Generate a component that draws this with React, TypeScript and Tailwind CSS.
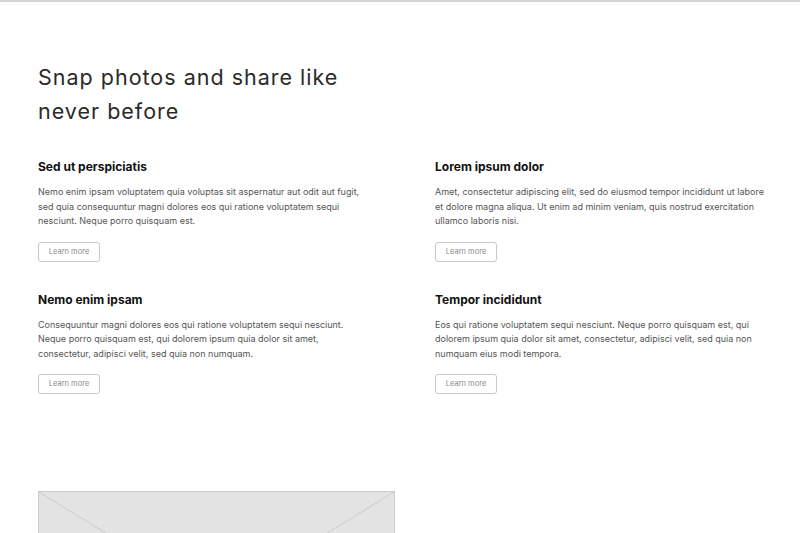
import React from 'react';

const features = [
  {
    title: 'Sed ut perspiciatis',
    body: 'Nemo enim ipsam voluptatem quia voluptas sit aspernatur aut odit aut fugit, sed quia consequuntur magni dolores eos qui ratione voluptatem sequi nesciunt. Neque porro quisquam est.',
  },
  {
    title: 'Lorem ipsum dolor',
    body: 'Amet, consectetur adipiscing elit, sed do eiusmod tempor incididunt ut labore et dolore magna aliqua. Ut enim ad minim veniam, quis nostrud exercitation ullamco laboris nisi.',
  },
  {
    title: 'Nemo enim ipsam',
    body: 'Consequuntur magni dolores eos qui ratione voluptatem sequi nesciunt. Neque porro quisquam est, qui dolorem ipsum quia dolor sit amet, consectetur, adipisci velit, sed quia non numquam.',
  },
  {
    title: 'Tempor incididunt',
    body: 'Eos qui ratione voluptatem sequi nesciunt. Neque porro quisquam est, qui dolorem ipsum quia dolor sit amet, consectetur, adipisci velit, sed quia non numquam eius modi tempora.',
  },
];

const Feature = ({ title, body }: { title: string; body: string }) => {
  return (
    <div>
      <h3 className="text-[12px] font-bold text-[#111] leading-[18px]">{title}</h3>
      <p className="mt-[9px] max-w-[332px] text-[9px] leading-[14.5px] text-[#555]">{body}</p>
      <button className="mt-[13px] h-[20px] w-[62px] rounded-[3px] border border-[#c8c8c8] text-[7.5px] text-[#8a8a8a]">
        Learn more
      </button>
    </div>
  );
};

const App = () => {
  return (
    <div className="min-h-screen bg-white border-t-2 border-[#d4d4d4] font-['Inter','Liberation_Sans',sans-serif]">
      <section className="px-[38px] pt-[58px]">
        <h1 className="max-w-[340px] text-[21.5px] font-normal leading-[34px] tracking-[1px] text-[#2a2a2a]">
          Snap photos and share like never before
        </h1>
        <div className="mt-[30px] grid grid-cols-[357px_357px] gap-x-[40px] gap-y-[29px]">
          {features.map((f) => (
            <Feature key={f.title} title={f.title} body={f.body} />
          ))}
        </div>
        <div className="mt-[97px] h-[220px] w-[357px] border border-[#cccccc] bg-[#e3e3e3]">
          <svg className="h-full w-full" viewBox="0 0 100 100" preserveAspectRatio="none">
            <line x1="0" y1="0" x2="100" y2="100" stroke="#cccccc" strokeWidth="1" vectorEffect="non-scaling-stroke" />
            <line x1="100" y1="0" x2="0" y2="100" stroke="#cccccc" strokeWidth="1" vectorEffect="non-scaling-stroke" />
          </svg>
        </div>
      </section>
    </div>
  );
};

export default App;
